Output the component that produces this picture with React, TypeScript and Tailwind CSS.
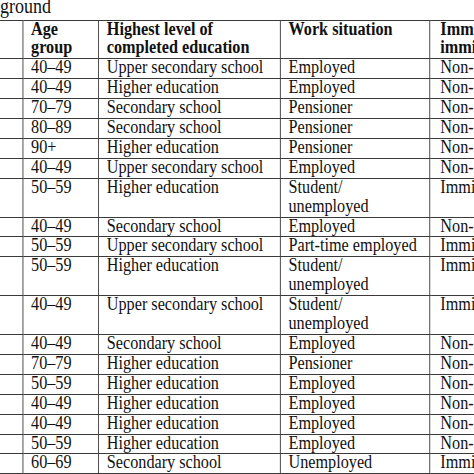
import React from "react";

type Row = { age: string; edu: string; work: string[]; imm: string };

const rows: Row[] = [
  { age: "40–49", edu: "Upper secondary school", work: ["Employed"], imm: "Non-immigrant" },
  { age: "40–49", edu: "Higher education", work: ["Employed"], imm: "Non-immigrant" },
  { age: "70–79", edu: "Secondary school", work: ["Pensioner"], imm: "Non-immigrant" },
  { age: "80–89", edu: "Secondary school", work: ["Pensioner"], imm: "Non-immigrant" },
  { age: "90+", edu: "Higher education", work: ["Pensioner"], imm: "Non-immigrant" },
  { age: "40–49", edu: "Upper secondary school", work: ["Employed"], imm: "Non-immigrant" },
  { age: "50–59", edu: "Higher education", work: ["Student/", "unemployed"], imm: "Immigrant" },
  { age: "40–49", edu: "Secondary school", work: ["Employed"], imm: "Non-immigrant" },
  { age: "50–59", edu: "Upper secondary school", work: ["Part-time employed"], imm: "Immigrant" },
  { age: "50–59", edu: "Higher education", work: ["Student/", "unemployed"], imm: "Immigrant" },
  { age: "40–49", edu: "Upper secondary school", work: ["Student/", "unemployed"], imm: "Immigrant" },
  { age: "40–49", edu: "Secondary school", work: ["Employed"], imm: "Non-immigrant" },
  { age: "70–79", edu: "Higher education", work: ["Pensioner"], imm: "Non-immigrant" },
  { age: "50–59", edu: "Higher education", work: ["Employed"], imm: "Non-immigrant" },
  { age: "40–49", edu: "Higher education", work: ["Employed"], imm: "Non-immigrant" },
  { age: "40–49", edu: "Higher education", work: ["Employed"], imm: "Non-immigrant" },
  { age: "50–59", edu: "Higher education", work: ["Employed"], imm: "Non-immigrant" },
  { age: "60–69", edu: "Secondary school", work: ["Unemployed"], imm: "Immigrant" },
];

const base = "border border-[#3a3a3a] align-top p-0 whitespace-nowrap text-left";
const td = base + " pl-[9px]";
const tdLast = base + " pl-[11px]";

function Cell({ children }: { children?: React.ReactNode }) {
  return <div className="-mt-[1px] pb-[1px]">{children}</div>;
}

export default function App() {
  return (
    <div className="w-[474px] h-[474px] overflow-hidden bg-white">
      <div className="w-[527px] origin-top-left scale-x-[0.9] text-[#111111] font-['Liberation_Serif',serif] text-[18px] leading-[18.9px]">
        <div className="h-[19.5px] leading-[13px] text-[20px]">ground</div>
        <table className="table-fixed border-collapse w-[620px]">
          <colgroup>
            <col className="w-[25px]" />
            <col className="w-[84.2px]" />
            <col className="w-[201.9px]" />
            <col className="w-[166.7px]" />
            <col className="w-[142px]" />
          </colgroup>
          <thead>
            <tr>
              <th className={td + " border-l-0 font-bold"}>
                <Cell>
                  &nbsp;
                  <br />
                  &nbsp;
                </Cell>
              </th>
              <th className={td + " font-bold"}>
                <Cell>
                  Age
                  <br />
                  group
                </Cell>
              </th>
              <th className={td + " font-bold"}>
                <Cell>
                  Highest level of
                  <br />
                  completed education
                </Cell>
              </th>
              <th className={td + " font-bold"}>
                <Cell>Work situation</Cell>
              </th>
              <th className={tdLast + " font-bold"}>
                <Cell>
                  Immigrant/
                  <br />
                  immigrant background
                </Cell>
              </th>
            </tr>
          </thead>
          <tbody>
            {rows.map((r, i) => (
              <tr key={i}>
                <td className={td + " border-l-0"}>
                  <Cell>
                    {r.work.length > 1 ? (
                      <>
                        &nbsp;
                        <br />
                        &nbsp;
                      </>
                    ) : (
                      <>&nbsp;</>
                    )}
                  </Cell>
                </td>
                <td className={td}>
                  <Cell>{r.age}</Cell>
                </td>
                <td className={td}>
                  <Cell>{r.edu}</Cell>
                </td>
                <td className={td}>
                  <Cell>
                    {r.work.map((w, j) => (
                      <React.Fragment key={j}>
                        {j > 0 && <br />}
                        {w}
                      </React.Fragment>
                    ))}
                  </Cell>
                </td>
                <td className={tdLast}>
                  <Cell>{r.imm}</Cell>
                </td>
              </tr>
            ))}
          </tbody>
        </table>
      </div>
    </div>
  );
}
